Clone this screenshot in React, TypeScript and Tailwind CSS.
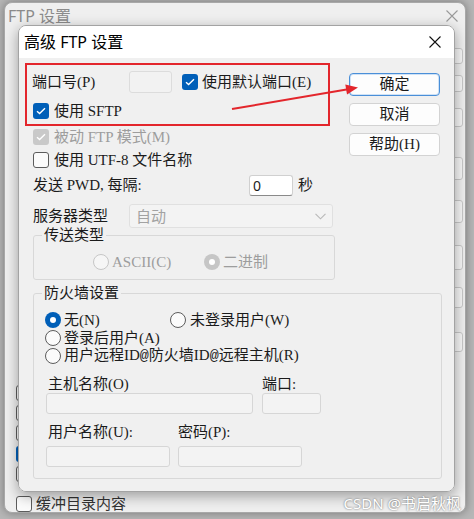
import React from "react";

type CheckState = "on" | "off" | "dim";
type RadioState = "on" | "off" | "dimOn" | "dimOff";

// 複選框
const Check = ({ state }: { state: CheckState }) => {
  if (state === "off") {
    return <span className="block h-4 w-4 shrink-0 rounded-[3px] border border-[#5c5c5c] bg-[#fbfbfb]" />;
  }
  return (
    <span
      className={
        state === "on"
          ? "flex h-4 w-4 shrink-0 items-center justify-center rounded-[3px] bg-[#005fb8]"
          : "flex h-4 w-4 shrink-0 items-center justify-center rounded-[3px] bg-[#c9c9c9]"
      }
    >
      <svg width="10" height="8" viewBox="0 0 10 8">
        <path d="M1 4.2 3.6 6.6 9 1.2" fill="none" stroke="#fff" strokeWidth="1.4" />
      </svg>
    </span>
  );
};

// 單選框
const Radio = ({ state }: { state: RadioState }) => {
  if (state === "on") {
    return (
      <span className="flex h-4 w-4 shrink-0 items-center justify-center rounded-full bg-[#005fb8]">
        <span className="block h-[6px] w-[6px] rounded-full bg-white" />
      </span>
    );
  }
  if (state === "dimOn") {
    return (
      <span className="flex h-4 w-4 shrink-0 items-center justify-center rounded-full bg-[#c6c6c6]">
        <span className="block h-[6px] w-[6px] rounded-full bg-white" />
      </span>
    );
  }
  if (state === "dimOff") {
    return <span className="block h-4 w-4 shrink-0 rounded-full border border-[#c6c6c6] bg-[#f6f6f6]" />;
  }
  return <span className="block h-4 w-4 shrink-0 rounded-full border border-[#5c5c5c] bg-[#fbfbfb]" />;
};

// 入力欄（無効）
const Field = ({ w }: { w: string }) => (
  <span className={`block h-[21px] ${w} rounded-[3px] border border-[#d6d6d6] bg-[#f3f3f3]`} />
);

const CloseX = ({ color }: { color: string }) => (
  <svg width="12" height="12" viewBox="0 0 12 12">
    <path d="M0.5 0.5 11.5 11.5 M11.5 0.5 0.5 11.5" stroke={color} strokeWidth="1.1" />
  </svg>
);

// 半角の @
const At = () => <span className="font-['Liberation_Mono',monospace]">@</span>;

const App = () => {
  return (
    <div className="relative h-[519px] w-[474px] overflow-hidden bg-[#b7b7b7] font-['Liberation_Serif','Noto_Sans_CJK_SC',serif] text-[15px] text-[#1b1b1b]">
      {/* 背後の FTP 設置 ウィンドウ */}
      <div className="absolute left-[4px] top-[2px] flex h-[511px] w-[462px] flex-col rounded-lg border border-[#a8a8a8] bg-[#efefef] shadow-[0_0_10px_rgba(0,0,0,0.35)]">
        <div className="flex h-[26px] items-center justify-between pl-[3px] pr-[7px]">
          <span className="font-['Noto_Sans','Noto_Sans_CJK_SC',sans-serif] text-[16px] text-[#8b8b8b]">FTP 设置</span>
          <CloseX color="#9a9a9a" />
        </div>
        <div className="flex flex-1 justify-between">
          <div className="flex flex-col pl-[11px]">
            <span className="mt-[356px] flex"><Check state="off" /></span>
            <span className="mt-[4px] flex"><Check state="off" /></span>
            <span className="mt-[4px] flex"><Check state="off" /></span>
            <span className="mt-[5px] flex"><Check state="on" /></span>
            <span className="mt-[4px] flex"><Check state="off" /></span>
            <div className="mt-[14px] flex h-[16px] items-center gap-[4px]">
              <Check state="off" />
              <span className="text-[#333]">缓冲目录内容</span>
            </div>
          </div>
          <div className="flex flex-col pr-[2px]">
            <span className="mt-[19px] h-[16px] w-[30px] rounded-[3px] border border-[#c9c9c9] bg-[#f7f7f7]" />
            <span className="mt-[11px] h-[17px] w-[30px] rounded-[3px] border border-[#c9c9c9] bg-[#f7f7f7]" />
            <span className="mt-[16px] h-[19px] w-[30px] rounded-[3px] border border-[#c9c9c9] bg-[#f7f7f7]" />
            <span className="mt-[30px] h-[23px] w-[30px] rounded-[3px] border border-[#c9c9c9] bg-[#f7f7f7]" />
            <span className="mt-[20px] h-[23px] w-[30px] rounded-[3px] border border-[#c9c9c9] bg-[#f7f7f7]" />
            <span className="mt-[22px] h-[25px] w-[30px] rounded-[3px] border border-[#c9c9c9] bg-[#f7f7f7]" />
            <span className="mt-[17px] h-[21px] w-[30px] rounded-[3px] border border-[#c9c9c9] bg-[#f7f7f7]" />
            <span className="mt-[24px] h-[20px] w-[30px] rounded-[3px] border border-[#c9c9c9] bg-[#f7f7f7]" />
          </div>
        </div>
      </div>

      {/* 高級 FTP 設置 ダイアログ */}
      <div className="absolute left-[18px] top-[25px] flex h-[467px] w-[437px] flex-col overflow-hidden rounded-lg border border-[#a3a3a3] shadow-[0_4px_14px_rgba(0,0,0,0.35)]">
        <div className="flex h-[32px] items-center justify-between bg-white pl-[5px] pr-[13px]">
          <span className="font-['Noto_Sans','Noto_Sans_CJK_SC',sans-serif] text-[16px] text-black">高级 FTP 设置</span>
          <CloseX color="#111" />
        </div>

        <div className="flex-1 bg-[#f0f0f0] pl-[6px] pt-[5px]">
          <div className="flex items-start">
            {/* 左列 */}
            <div className="flex w-[310px] flex-col">
              <div className="h-[63px] w-[305px] border-2 border-[#e3262c] pl-[5px] pt-[6px]">
                <div className="flex h-[22px] items-center">
                  <span className="w-[97px]">端口号(P)</span>
                  <span className="h-[22px] w-[43px] rounded-[3px] border border-[#dcdcdc] bg-[#f2f2f2]" />
                  <span className="ml-[10px] flex"><Check state="on" /></span>
                  <span className="ml-[4px]">使用默认端口(E)</span>
                </div>
                <div className="mt-[10px] flex h-[16px] items-center pl-[1px]">
                  <Check state="on" />
                  <span className="ml-[5px]">使用 SFTP</span>
                </div>
              </div>

              <div className="mt-[3px] flex h-[16px] items-center pl-[8px]">
                <Check state="dim" />
                <span className="ml-[5px] text-[#9d9d9d]">被动 FTP 模式(M)</span>
              </div>
              <div className="mt-[7px] flex h-[16px] items-center pl-[8px]">
                <Check state="off" />
                <span className="ml-[5px]">使用 UTF-8 文件名称</span>
              </div>
              <div className="mt-[7px] flex h-[21px] items-center pl-[8px]">
                <span className="w-[216px]">发送 PWD, 每隔:</span>
                <span className="flex h-[21px] w-[44px] items-center rounded-[3px] border border-[#d0d0d0] border-b-[#8a8a8a] bg-white pl-[3px] font-['Noto_Sans',sans-serif] text-[14px]">
                  0
                </span>
                <span className="ml-[5px]">秒</span>
              </div>
              <div className="mt-[8px] flex h-[24px] items-center pl-[8px]">
                <span className="w-[96px]">服务器类型</span>
                <span className="flex h-[24px] w-[204px] items-center justify-between rounded-[3px] border border-[#e0e0e0] bg-[#f3f3f3] pl-[6px] pr-[6px] font-['Noto_Sans_CJK_SC',sans-serif] text-[#a2a2a2]">
                  自动
                  <svg width="11" height="7" viewBox="0 0 11 7">
                    <path d="M0.5 0.8 5.5 5.8 10.5 0.8" fill="none" stroke="#b8b8b8" strokeWidth="1.1" />
                  </svg>
                </span>
              </div>
            </div>

            {/* ボタン列 */}
            <div className="ml-[14px] flex w-[91px] flex-col pt-[10px]">
              <button className="flex h-[23px] items-center justify-center rounded-[4px] border border-[#4a8fd8] bg-[#fdfdfd] shadow-[inset_0_0_0_1px_#cfe2f6]">
                确定
              </button>
              <button className="mt-[7px] flex h-[23px] items-center justify-center rounded-[4px] border border-[#d3d3d3] bg-[#fdfdfd]">
                取消
              </button>
              <button className="mt-[7px] flex h-[23px] items-center justify-center rounded-[4px] border border-[#d3d3d3] bg-[#fdfdfd]">
                帮助(H)
              </button>
            </div>
          </div>

          {/* 传送类型 */}
          <fieldset className="ml-[8px] w-[302px] rounded-[3px] border border-[#d8d8d8] pb-[9px] pl-[8px]">
            <legend className="px-[2px] leading-[15px]">传送类型</legend>
            <div className="mt-[11px] flex h-[16px] items-center pl-[51px]">
              <div className="flex w-[111px] items-center">
                <Radio state="dimOff" />
                <span className="ml-[3px] text-[#9d9d9d]">ASCII(C)</span>
              </div>
              <Radio state="dimOn" />
              <span className="ml-[3px] text-[#9d9d9d]">二进制</span>
            </div>
          </fieldset>

          {/* 防火墙设置 */}
          <fieldset className="ml-[8px] mt-[6px] w-[409px] rounded-[3px] border border-[#d8d8d8] pb-[11px] pl-[8px]">
            <legend className="px-[2px] leading-[15px]">防火墙设置</legend>
            <div className="mt-[10px] flex h-[18px] items-center pl-[3px]">
              <div className="flex w-[125px] items-center">
                <Radio state="on" />
                <span className="ml-[3px]">无(N)</span>
              </div>
              <Radio state="off" />
              <span className="ml-[4px]">未登录用户(W)</span>
            </div>
            <div className="flex h-[18px] items-center pl-[3px]">
              <Radio state="off" />
              <span className="ml-[3px]">登录后用户(A)</span>
            </div>
            <div className="flex h-[18px] items-center pl-[3px]">
              <Radio state="off" />
              <span className="ml-[3px]">
                用户远程ID<At />防火墙ID<At />远程主机(R)
              </span>
            </div>

            <div className="mt-[11px] flex h-[16px] items-center pl-[6px]">
              <span className="w-[214px]">主机名称(O)</span>
              <span>端口:</span>
            </div>
            <div className="mt-[1px] flex gap-[9px] pl-[4px]">
              <Field w="w-[207px]" />
              <Field w="w-[59px]" />
            </div>

            <div className="mt-[10px] flex h-[16px] items-center pl-[6px]">
              <span className="w-[130px]">用户名称(U):</span>
              <span>密码(P):</span>
            </div>
            <div className="mt-[6px] flex gap-[8px] pl-[4px]">
              <Field w="w-[124px]" />
              <Field w="w-[124px]" />
            </div>
          </fieldset>
        </div>
      </div>

      {/* 赤い矢印 */}
      <svg className="pointer-events-none absolute left-0 top-0" width="474" height="519" viewBox="0 0 474 519">
        <line x1="232" y1="109" x2="348" y2="89.3" stroke="#e3262c" strokeWidth="2" />
        <polygon points="358,87.5 347,94.4 345.3,84.6" fill="#e3262c" />
      </svg>

      {/* 透かし */}
      <span className="absolute bottom-[5px] right-[13px] font-['Noto_Sans','Noto_Sans_CJK_SC',sans-serif] text-[15px] text-white [text-shadow:0_0_2px_#555]">
        CSDN @书启秋枫
      </span>
    </div>
  );
};

export default App;
